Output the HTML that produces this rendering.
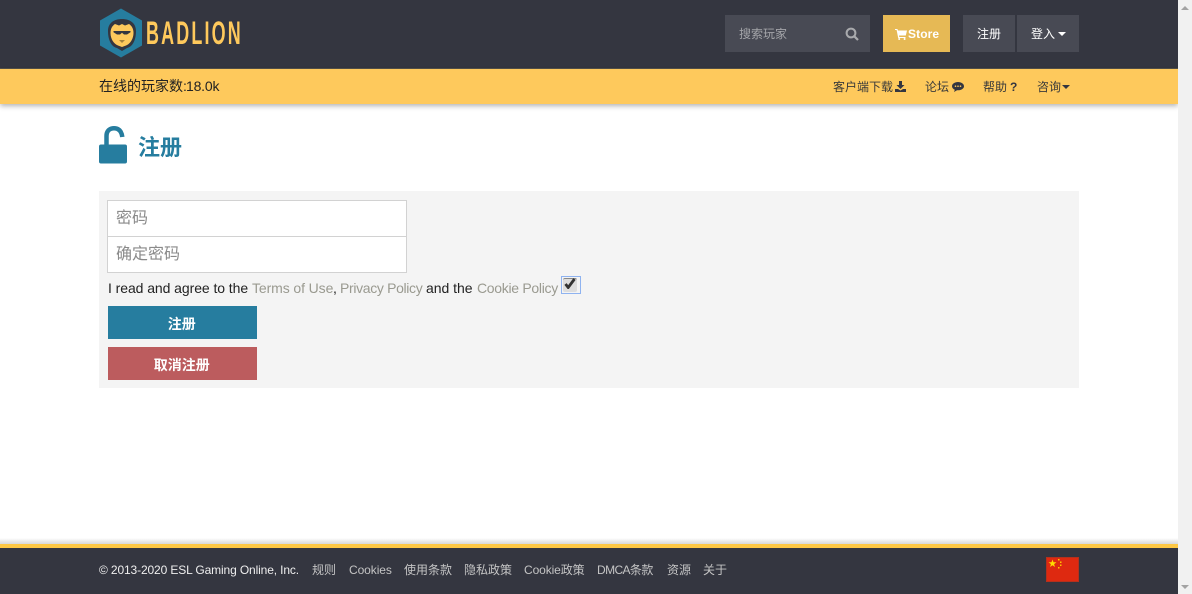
<!DOCTYPE html>
<html lang="zh"><head><meta charset="utf-8"><title>Badlion</title>
<style>
html,body{margin:0;padding:0;width:1192px;height:594px;overflow:hidden;background:#fff}
body{position:relative;font-family:"Liberation Sans","Noto Sans CJK SC",sans-serif;color:#222}
.a{position:absolute;white-space:nowrap}
a{color:inherit;text-decoration:none}
svg{display:block}
</style></head><body>
<div class="a" style="left:0;top:0;width:1178px;height:69px;background:#343640"></div>
<div class="a" style="left:0;top:68px;width:1178px;height:1px;background:#55524a"></div>
<div class="a" style="left:0;top:69px;width:1178px;height:35px;background:#fec95c;box-shadow:0 2px 5px rgba(0,0,0,.3)"></div>

<svg class="a" style="left:99px;top:8px" width="44" height="50" viewBox="0 0 44 50">
<path d="M22 0.500L43 12.500V37.500L22 49.500L1 37.500V12.500Z" fill="#267d9f"/>
<path d="M23 11C31 11 37 15 37 23C37 33 33 39 28 40L23 43L18 40C13 39 9 33 9 23C9 15 15 11 23 11Z" fill="#343640"/>
<path d="M16 16L20 17.500L23 16L26 17.500L30 16C33 18 34.500 21 34.500 25C34.500 31 31 36 27 37.500L23 39L19 37.500C15 36 11.500 31 11.500 25C11.500 21 13 18 16 16Z" fill="#fec95c"/>
<path d="M14.500 23H31.500V24.300L28 26.500H25L23 24.800L21 26.500H18L14.500 24.300Z" fill="#343640"/>
<path d="M20 32H26L23 35Z" fill="#a5813a"/>
</svg>
<div class="a" style="left:146px;top:14px;font-size:32px;line-height:38px;color:#fec95c;letter-spacing:3.9px;transform:scaleX(.56);transform-origin:0 0;font-weight:700">BADLION</div>

<div class="a" style="left:725px;top:15px;width:145px;height:37px;background:#484a54"></div>
<div class="a" style="left:739px;top:26px;font-size:12px;line-height:16px;color:#a4a5a9">搜索玩家</div>
<svg class="a" style="left:845px;top:27px" width="14" height="14" viewBox="0 0 14 14"><circle cx="6" cy="6" r="4.400" fill="none" stroke="#a9aaad" stroke-width="2"/><path d="M9.200 9.200L13 13" stroke="#a9aaad" stroke-width="2.200"/></svg>

<div class="a" style="left:883px;top:15px;width:67px;height:37px;background:#e6b955"></div>
<svg class="a" style="left:895px;top:29px" width="12" height="11" viewBox="0 0 12 11"><path d="M0 0H2.400L3 1.500H12L10.800 6.500H4L4.300 8H10.500V9H3.200L1.600 1H0Z" fill="#fff"/><circle cx="4.200" cy="10" r="1" fill="#fff"/><circle cx="9.600" cy="10" r="1" fill="#fff"/></svg>
<div class="a" style="left:908px;top:26px;font-size:12px;line-height:16px;color:#fff;font-weight:700;letter-spacing:.1px">Store</div>

<div class="a" style="left:963px;top:15px;width:52px;height:37px;background:#484a54"></div>
<div class="a" style="left:1017px;top:15px;width:62px;height:37px;background:#484a54"></div>
<div class="a" style="left:977px;top:26px;font-size:12px;line-height:16px;color:#fff">注册</div>
<div class="a" style="left:1031px;top:26px;font-size:12px;line-height:16px;color:#fff">登入</div>
<div class="a" style="left:1058px;top:32px;width:0;height:0;border-left:4px solid transparent;border-right:4px solid transparent;border-top:4px solid #fff"></div>

<div class="a" style="left:99px;top:77px;font-size:14px;line-height:19px;color:#222">在线的玩家数:</div>
<div class="a" style="left:186px;top:77px;font-size:14px;line-height:19px;color:#222;letter-spacing:-.2px">18.0k</div>

<div class="a" style="left:833px;top:79px;font-size:12px;line-height:16px;color:#3a3a3a">客户端下载</div>
<svg class="a" style="left:895px;top:81px" width="11" height="11" viewBox="0 0 11 11"><path d="M4 0H7V4H9.500L5.500 8L1.500 4H4Z" fill="#343640"/><path d="M0 8H3L5.500 9.500L8 8H11V11H0Z" fill="#343640"/></svg>
<div class="a" style="left:925px;top:79px;font-size:12px;line-height:16px;color:#3a3a3a">论坛</div>
<svg class="a" style="left:952px;top:82px" width="12" height="10" viewBox="0 0 12 10"><path d="M6 0C9.300 0 12 1.800 12 4.200C12 6.500 9.300 8.300 6 8.300L5 8.300L2 10L2.800 7.700C1.100 7 0 5.700 0 4.200C0 1.800 2.700 0 6 0Z" fill="#343640"/><circle cx="3.500" cy="4.200" r=".8" fill="#fec95c"/><circle cx="6" cy="4.200" r=".8" fill="#fec95c"/><circle cx="8.500" cy="4.200" r=".8" fill="#fec95c"/></svg>
<div class="a" style="left:983px;top:79px;font-size:12px;line-height:16px;color:#3a3a3a">帮助</div>
<div class="a" style="left:1010px;top:79px;font-size:12px;line-height:16px;color:#343640;font-weight:700">?</div>
<div class="a" style="left:1037px;top:79px;font-size:12px;line-height:16px;color:#3a3a3a">咨询</div>
<div class="a" style="left:1062px;top:85px;width:0;height:0;border-left:4px solid transparent;border-right:4px solid transparent;border-top:4px solid #343640"></div>

<svg class="a" style="left:99px;top:126px" width="29" height="38" viewBox="0 0 29 38">
<path d="M7.500 20V10C7.500 5 10.500 2.300 15 2.300C19.500 2.300 22.500 5 23.300 11" fill="none" stroke="#267d9f" stroke-width="4.500"/>
<path d="M2 18.500H26A2 2 0 0 1 28 20.500V35.500A2 2 0 0 1 26 37.500H2A2 2 0 0 1 0 35.500V20.500A2 2 0 0 1 2 18.500Z" fill="#267d9f"/>
</svg>
<div class="a" style="left:138px;top:133px;font-size:22px;line-height:29px;font-weight:700;color:#267d9f">注册</div>

<div class="a" style="left:99px;top:191px;width:980px;height:197px;background:#f4f4f4"></div>
<div class="a" style="left:107px;top:200px;width:298px;height:35px;background:#fff;border:1px solid #d2d2d2"></div>
<div class="a" style="left:107px;top:236px;width:298px;height:35px;background:#fff;border:1px solid #d2d2d2"></div>
<div class="a" style="left:116px;top:208px;font-size:16px;line-height:21px;color:#8a8a8a">密码</div>
<div class="a" style="left:116px;top:244px;font-size:16px;line-height:21px;color:#8a8a8a">确定密码</div>

<div class="a" style="left:108px;top:279px;font-size:14px;line-height:18px;color:#222;letter-spacing:-.07px">I read and agree to the</div>
<div class="a" style="left:252px;top:279px;font-size:14px;line-height:18px;color:#9a9a90;letter-spacing:-.1px">Terms of Use</div>
<div class="a" style="left:333px;top:279px;font-size:14px;line-height:18px;color:#222">,</div>
<div class="a" style="left:340px;top:279px;font-size:14px;line-height:18px;color:#9a9a90;letter-spacing:-.34px">Privacy Policy</div>
<div class="a" style="left:426px;top:279px;font-size:14px;line-height:18px;color:#222;letter-spacing:-.02px">and the</div>
<div class="a" style="left:477px;top:279px;font-size:14px;line-height:18px;color:#9a9a90;letter-spacing:-.3px">Cookie Policy</div>
<div class="a" style="left:561px;top:276px;width:18px;height:16px;border:1px solid #8fb3f0;background:#f4f4f4"></div>
<div class="a" style="left:563px;top:278px;width:14px;height:13px;border-top:1px solid #888;background:#ddd;border-radius:2px"></div>
<svg class="a" style="left:564px;top:278px" width="12" height="11" viewBox="0 0 12 11"><path d="M1.500 6L4.200 9.500L10.500 1" fill="none" stroke="#333" stroke-width="2.800"/></svg>

<div class="a" style="left:108px;top:306px;width:148.500px;height:33px;background:#267d9f;color:#fff;font-size:14px;font-weight:700;line-height:36px;text-align:center;text-indent:-1px">注册</div>
<div class="a" style="left:108px;top:347px;width:148.500px;height:33px;background:#bc5c5e;color:#fff;font-size:14px;font-weight:700;line-height:37px;text-align:center;text-indent:-1px">取消注册</div>

<div class="a" style="left:0;top:538px;width:1178px;height:6px;background:linear-gradient(#fff,#d8d8d8)"></div>
<div class="a" style="left:0;top:544px;width:1178px;height:4px;background:#fec845"></div>
<div class="a" style="left:0;top:548px;width:1178px;height:46px;background:#343640"></div>
<div class="a" style="left:99px;top:562px;font-size:12px;line-height:16px;color:#eee;letter-spacing:-.13px">© 2013-2020 ESL Gaming Online, Inc.</div>
<div class="a" style="left:312px;top:562px;font-size:12px;line-height:16px;color:#c4c4c4">规则</div>
<div class="a" style="left:349px;top:562px;font-size:12px;line-height:16px;color:#c4c4c4;letter-spacing:-.08px">Cookies</div>
<div class="a" style="left:404px;top:562px;font-size:12px;line-height:16px;color:#c4c4c4">使用条款</div>
<div class="a" style="left:464px;top:562px;font-size:12px;line-height:16px;color:#c4c4c4">隐私政策</div>
<div class="a" style="left:524px;top:562px;font-size:12px;line-height:16px;color:#c4c4c4;letter-spacing:-.1px">Cookie政策</div>
<div class="a" style="left:597px;top:562px;font-size:12px;line-height:16px;color:#c4c4c4;letter-spacing:-.6px">DMCA条款</div>
<div class="a" style="left:667px;top:562px;font-size:12px;line-height:16px;color:#c4c4c4">资源</div>
<div class="a" style="left:703px;top:562px;font-size:12px;line-height:16px;color:#c4c4c4">关于</div>

<svg class="a" style="left:1046px;top:557px" width="33" height="25" viewBox="0 0 33 25">
<rect width="33" height="25" fill="#de2910"/>
<rect x=".5" y=".5" width="32" height="24" fill="none" stroke="#b5301c"/>
<path d="M6.500 2.500L7.500 5.300H10.500L8.100 7.100L9 10L6.500 8.300L4 10L4.900 7.100L2.500 5.300H5.500Z" fill="#ffde00"/>
<rect x="12" y="2" width="1.500" height="1.500" fill="#ffc400"/><rect x="14" y="4.500" width="1.500" height="1.500" fill="#ffc400"/><rect x="14" y="7.500" width="1.500" height="1.500" fill="#ffc400"/><rect x="12" y="10" width="1.500" height="1.500" fill="#ffc400"/>
</svg>

<div class="a" style="left:1178px;top:0;width:14px;height:594px;background:#f1f1f1"></div>
<div class="a" style="left:1181px;top:6px;width:0;height:0;border-left:4px solid transparent;border-right:4px solid transparent;border-bottom:4px solid #a3a3a3"></div>
<div class="a" style="left:1181px;top:585px;width:0;height:0;border-left:4px solid transparent;border-right:4px solid transparent;border-top:4px solid #a3a3a3"></div>
</body></html>
